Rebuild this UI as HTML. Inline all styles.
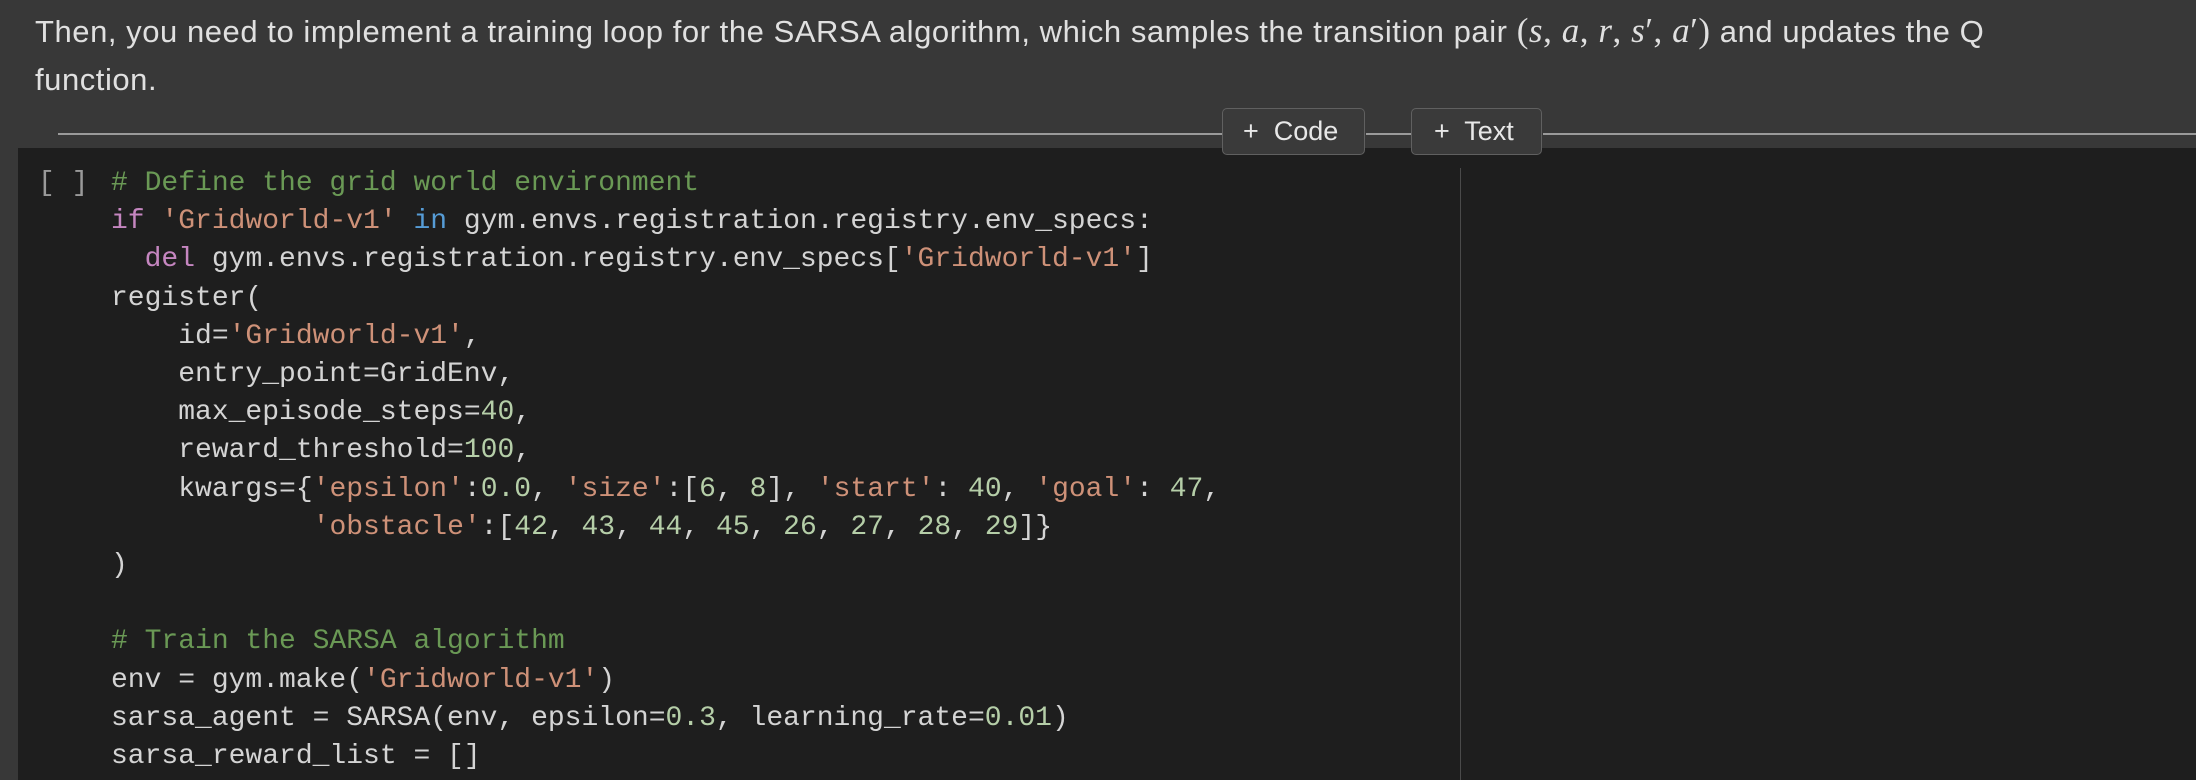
<!DOCTYPE html>
<html><head><meta charset="utf-8"><style>
html,body{margin:0;padding:0}
body{width:2196px;height:780px;background:#383838;position:relative;overflow:hidden;font-family:"Liberation Sans",sans-serif}
.t{position:absolute;left:35px;color:#e0e0e0;font-size:31px;letter-spacing:0.55px;white-space:nowrap}
.m{font-family:"Liberation Serif",serif;font-style:italic;font-size:35px}
.m span{font-style:normal}
.hr{position:absolute;top:133px;height:2px;background:#9a9a9a}
.btn{position:absolute;top:108px;height:45px;border:1.5px solid #606060;border-radius:5px;background:#3a3a3a;color:#e8e8e8;font-size:27px;line-height:45px;box-sizing:content-box}
.cell{position:absolute;left:18px;top:148px;right:0;bottom:0;background:#1e1e1e}
.div{position:absolute;left:1460px;top:168px;width:1px;bottom:0;background:#4a4a4a}
.code{position:absolute;left:111px;top:165px;font-family:"Liberation Mono",monospace;font-size:28px;line-height:38.2px;color:#d4d4d4;white-space:pre;margin:0}
.br{position:absolute;left:38px;top:165px;font-family:"Liberation Mono",monospace;font-size:28px;line-height:38.2px;color:#9a9a9a;white-space:pre;margin:0}
.c{color:#6a9955}.s{color:#ce9178}.n{color:#b5cea8}.k{color:#c586c0}.b{color:#569cd6}
</style></head><body>
<div class="t" style="top:11px">Then, you need to implement a training loop for the SARSA algorithm, which samples the transition pair <span class="m"><span>(</span>s<span>,</span> a<span>,</span> r<span>,</span> s<span>′,</span> a<span>′)</span></span> and updates the Q</div>
<div class="t" style="top:62px">function.</div>
<div class="hr" style="left:58px;width:1164px"></div>
<div class="hr" style="left:1366px;width:45px"></div>
<div class="hr" style="left:1543px;right:0"></div>
<div class="cell"></div>
<div class="btn" style="left:1222px;width:141px"><span style="margin-left:20px">+&nbsp; Code</span></div>
<div class="btn" style="left:1411px;width:129px"><span style="margin-left:22px">+&nbsp; Text</span></div>
<div class="div"></div>
<pre class="br">[ ]</pre>
<pre class="code"><span class="c"># Define the grid world environment</span>
<span class="k">if</span> <span class="s">'Gridworld-v1'</span> <span class="b">in</span> gym.envs.registration.registry.env_specs:
  <span class="k">del</span> gym.envs.registration.registry.env_specs[<span class="s">'Gridworld-v1'</span>]
register(
    id=<span class="s">'Gridworld-v1'</span>,
    entry_point=GridEnv,
    max_episode_steps=<span class="n">40</span>,
    reward_threshold=<span class="n">100</span>,
    kwargs={<span class="s">'epsilon'</span>:<span class="n">0.0</span>, <span class="s">'size'</span>:[<span class="n">6</span>, <span class="n">8</span>], <span class="s">'start'</span>: <span class="n">40</span>, <span class="s">'goal'</span>: <span class="n">47</span>,
            <span class="s">'obstacle'</span>:[<span class="n">42</span>, <span class="n">43</span>, <span class="n">44</span>, <span class="n">45</span>, <span class="n">26</span>, <span class="n">27</span>, <span class="n">28</span>, <span class="n">29</span>]}
)

<span class="c"># Train the SARSA algorithm</span>
env = gym.make(<span class="s">'Gridworld-v1'</span>)
sarsa_agent = SARSA(env, epsilon=<span class="n">0.3</span>, learning_rate=<span class="n">0.01</span>)
sarsa_reward_list = []</pre>
</body></html>
